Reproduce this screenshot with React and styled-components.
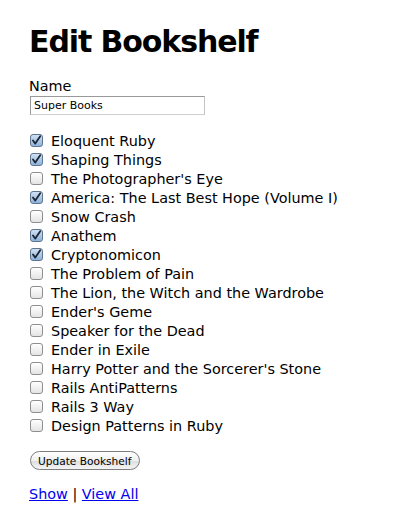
import styled, { createGlobalStyle } from "styled-components";

const GlobalStyle = createGlobalStyle`
  html, body { margin: 0; padding: 0; background: #fff; }
  body { font-family: "DejaVu Sans", Verdana, sans-serif; color: #000; }
`;

const books = [
  { title: "Eloquent Ruby", checked: true },
  { title: "Shaping Things", checked: true },
  { title: "The Photographer's Eye", checked: false },
  { title: "America: The Last Best Hope (Volume I)", checked: true },
  { title: "Snow Crash", checked: false },
  { title: "Anathem", checked: true },
  { title: "Cryptonomicon", checked: true },
  { title: "The Problem of Pain", checked: false },
  { title: "The Lion, the Witch and the Wardrobe", checked: false },
  { title: "Ender's Geme", checked: false },
  { title: "Speaker for the Dead", checked: false },
  { title: "Ender in Exile", checked: false },
  { title: "Harry Potter and the Sorcerer's Stone", checked: false },
  { title: "Rails AntiPatterns", checked: false },
  { title: "Rails 3 Way", checked: false },
  { title: "Design Patterns in Ruby", checked: false },
];

export default function App() {
  return (
    <Page>
      <GlobalStyle />
      <Title>Edit Bookshelf</Title>
      <Form onSubmit={(e) => e.preventDefault()}>
        <Label htmlFor="name">Name</Label>
        <NameInput id="name" defaultValue="Super Books" />
        <List>
          {books.map((b) => (
            <Row key={b.title}>
              <Box $checked={b.checked}>
                {b.checked && (
                  <svg width="11" height="11" viewBox="0 0 11 11">
                    <path
                      d="M2 5.5 L4.3 8.6 L9.2 1.2"
                      fill="none"
                      stroke="#1d2633"
                      strokeWidth="1.8"
                      strokeLinecap="round"
                      strokeLinejoin="round"
                    />
                  </svg>
                )}
              </Box>
              <span>{b.title}</span>
            </Row>
          ))}
        </List>
        <Button type="submit">Update Bookshelf</Button>
      </Form>
      <Links>
        <a href="#">Show</a> | <a href="#">View All</a>
      </Links>
    </Page>
  );
}

const Page = styled.div`
  padding: 24px 29px;
`;

const Title = styled.h1`
  margin: 0 0 18px;
  font-size: 30px;
  letter-spacing: -1.1px;
  font-weight: bold;
  line-height: 36px;
`;

const Form = styled.form`
  display: flex;
  flex-direction: column;
  align-items: flex-start;
`;

const Label = styled.label`
  font-size: 14.4px;
  line-height: 17px;
`;

const NameInput = styled.input`
  margin: 1px 0 0 1px;
  width: 175px;
  height: 19px;
  box-sizing: border-box;
  padding: 1px 3px;
  border: 1px solid #9a9a9a;
  border-bottom-color: #cfcfcf;
  border-right-color: #c4c4c4;
  font-family: "DejaVu Sans", Verdana, sans-serif;
  font-size: 11px;
  color: #000;
  outline: none;
`;

const List = styled.div`
  margin-top: 16px;
  display: flex;
  flex-direction: column;
`;

const Row = styled.label`
  display: flex;
  align-items: center;
  height: 19px;
  font-size: 14.4px;
  gap: 8px;
  padding-left: 1px;
`;

const Box = styled.span`
  width: 13px;
  height: 13px;
  box-sizing: border-box;
  border-radius: 3px;
  border: 1px solid ${(p) => (p.$checked ? "#5e7590" : "#8e8e8e")};
  background: ${(p) =>
    p.$checked
      ? "linear-gradient(#cfe0f3, #8fb3dc)"
      : "linear-gradient(#ffffff, #e4e4e4)"};
  display: flex;
  align-items: center;
  justify-content: center;
`;

const Button = styled.button`
  margin-top: 16px;
  margin-left: 1px;
  height: 19px;
  padding: 0 7px;
  border: 1px solid #7d7d7d;
  border-radius: 10px;
  background: linear-gradient(#ffffff, #f0f0f0 50%, #dedede 51%, #f4f4f4);
  font-family: "DejaVu Sans", Verdana, sans-serif;
  font-size: 10.6px;
  color: #000;
`;

const Links = styled.div`
  margin-top: 16px;
  font-size: 14.4px;
  a { color: #0000ee; }
`;
